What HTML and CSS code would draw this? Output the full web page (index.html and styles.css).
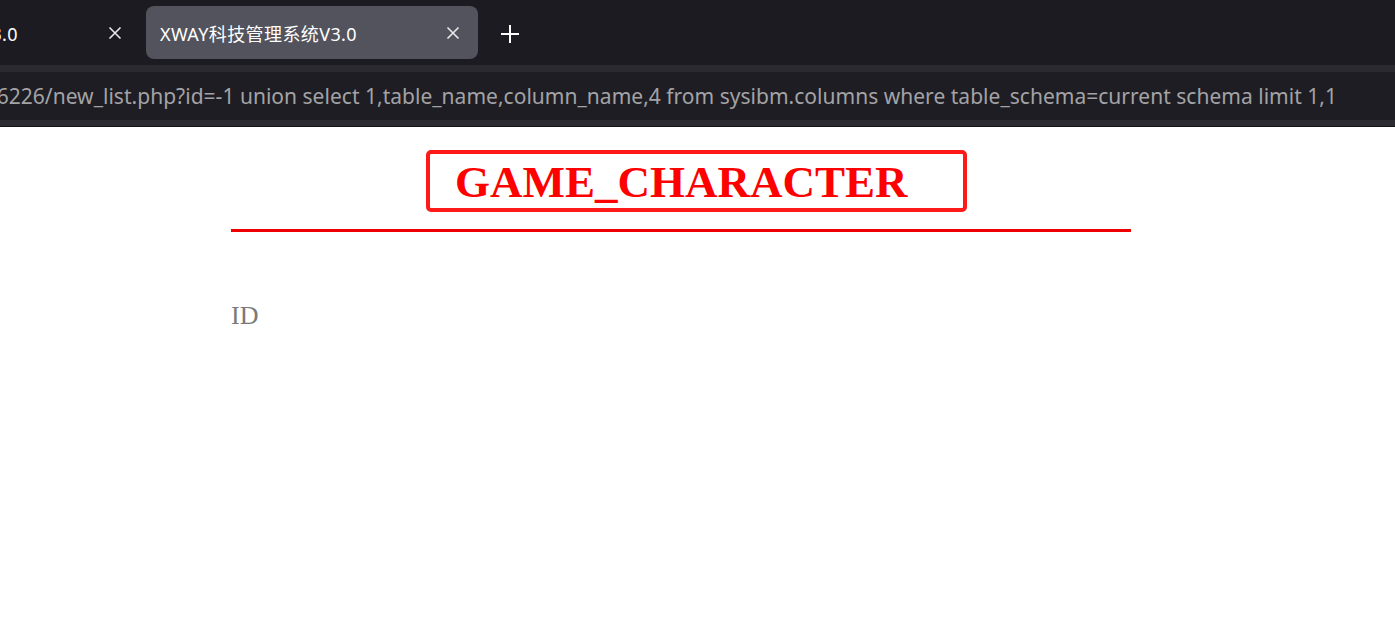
FILE: index.html
```html
<!DOCTYPE html>
<html lang="zh-CN">
<head>
<meta charset="utf-8">
<title>XWAY科技管理系统V3.0</title>
<link rel="stylesheet" href="styles.css">
</head>
<body>
<div class="chrome">
  <div class="tabbar">
    <div class="tab tab-inactive">
      <span class="tab-title tab-title-clipped">XWAY科技管理系统V3.0</span>
      <span class="tab-close">
        <svg width="14" height="14" viewBox="0 0 14 14"><path d="M1.5 1.5L12.5 12.5M12.5 1.5L1.5 12.5" stroke="#e8e8ea" stroke-width="1.6" fill="none"/></svg>
      </span>
    </div>
    <div class="tab tab-active">
      <span class="tab-title">XWAY科技管理系统V3.0</span>
      <span class="tab-close">
        <svg width="14" height="14" viewBox="0 0 14 14"><path d="M1.5 1.5L12.5 12.5M12.5 1.5L1.5 12.5" stroke="#e8e8ea" stroke-width="1.6" fill="none"/></svg>
      </span>
    </div>
    <div class="tab-new">
      <svg width="20" height="20" viewBox="0 0 20 20"><path d="M10 1V19M1 10H19" stroke="#ffffff" stroke-width="2" fill="none"/></svg>
    </div>
  </div>
  <div class="stripe"></div>
  <div class="addressbar">
    <span class="url">6226/new_list.php?id=-1 union select 1,table_name,column_name,4 from sysibm.columns where table_schema=current schema limit 1,1</span>
  </div>
  <div class="stripe stripe-bottom"></div>
</div>
<main class="page">
  <div class="title-row">
    <div class="title-box">
      <h1 class="title">GAME_CHARACTER</h1>
    </div>
  </div>
  <hr class="rule">
  <div class="field">ID</div>
</main>
</body>
</html>
```

FILE: styles.css
```css
html, body {
  margin: 0;
  padding: 0;
  background: #ffffff;
}

.chrome {
  background: #1c1b21;
  font-family: "Noto Sans", "Noto Sans CJK SC", sans-serif;
}

.tabbar {
  height: 65px;
  display: flex;
  align-items: center;
  overflow: hidden;
  background: #1c1b21;
}

.tab {
  height: 53px;
  display: flex;
  align-items: center;
  border-radius: 8px;
  box-sizing: border-box;
  flex-shrink: 0;
}

.tab-inactive {
  width: 140px;
  padding-right: 18px;
  overflow: hidden;
}

.tab-active {
  width: 332px;
  margin-left: 6px;
  padding: 0 18px 0 14px;
  background: #53535d;
}

.tab-title {
  color: #ffffff;
  font-size: 18px;
  white-space: nowrap;
  flex: 1;
  letter-spacing: 0.4px;
}

.tab-title-clipped {
  flex: 0 0 auto;
  margin-left: -179px;
}

.tab-inactive .tab-close {
  margin-left: auto;
}

.tab-close {
  width: 14px;
  height: 14px;
  display: flex;
}

.tab-new {
  margin-left: 22px;
  width: 20px;
  height: 20px;
  display: flex;
  margin-top: 2px;
}

.stripe {
  height: 7px;
  background: #2b2a31;
}

.stripe-bottom {
  height: 6px;
  border-bottom: 1px solid #121116;
}

.addressbar {
  height: 48px;
  background: #1e1d23;
  display: flex;
  align-items: center;
  justify-content: flex-end;
  padding-right: 58px;
  overflow: hidden;
}

.url {
  color: #a3a3a6;
  font-size: 21px;
  white-space: nowrap;
  flex-shrink: 0;
  letter-spacing: 0.02px;
}

.page {
  width: 900px;
  margin-left: 231px;
  font-family: "Liberation Serif", "Times New Roman", serif;
}

.title-row {
  display: flex;
  padding-top: 23px;
}

.title-box {
  margin-left: 195px;
  width: 541px;
  height: 62px;
  box-sizing: border-box;
  border: 4px solid #ff1a1a;
  border-radius: 5px;
  padding-left: 25px;
}

.title {
  margin: 0;
  color: #ff0000;
  font-size: 45px;
  font-weight: bold;
  line-height: 56px;
  white-space: nowrap;
}

.rule {
  margin: 17px 0 0 0;
  border: 0;
  height: 3px;
  background: #ee0000;
}

.field {
  margin-top: 69px;
  font-size: 26px;
  line-height: 30px;
  color: #7a7a7a;
}
```
